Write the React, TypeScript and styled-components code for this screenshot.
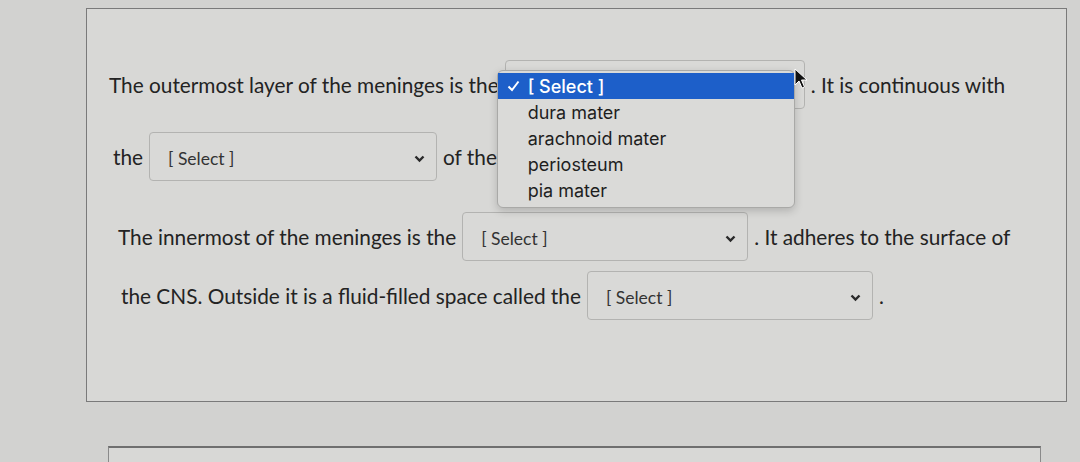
import React from 'react';
import styled, { createGlobalStyle } from 'styled-components';

const GlobalStyle = createGlobalStyle`
  body {
    margin: 0;
    background: #d2d2d0;
    font-family: Lato, "Open Sans", sans-serif;
  }
`;

const Page = styled.div`
  height: 462px;
  overflow: hidden;
  box-sizing: border-box;
  padding: 8px 13px 0 86px;
`;

const Panel = styled.div`
  height: 394px;
  box-sizing: border-box;
  border: 1px solid #7a7a7a;
  background: #d8d8d6;
  padding: 51px 0 0 22px;
`;

const NextPanel = styled.div`
  height: 60px;
  margin: 44px 26px 0 22px;
  border-top: 2px solid #6f6f6f;
  border-left: 1px solid #8a8a8a;
  border-right: 1px solid #8a8a8a;
  background: #d8d8d6;
`;

const Paragraph = styled.div<{ $gap: number; $after?: number }>`
  display: flex;
  flex-direction: column;
  gap: ${(p) => p.$gap}px;
  margin-bottom: ${(p) => p.$after ?? 0}px;
`;

const Line = styled.div<{ $indent?: number }>`
  display: flex;
  align-items: baseline;
  gap: 6px;
  padding-left: ${(p) => p.$indent ?? 0}px;
  font-size: 20.8px;
  color: #232323;
  white-space: nowrap;
`;

const Text = styled.span``;

const SelectWrap = styled.span`
  position: relative;
  display: inline-flex;
`;

const SelectBox = styled.span<{ $width: number }>`
  display: flex;
  align-items: center;
  justify-content: space-between;
  box-sizing: border-box;
  width: ${(p) => p.$width}px;
  height: 49px;
  padding: 4px 11px 0 18px;
  border: 1px solid #b3b3b1;
  border-radius: 4px;
  background: #d9d9d7;
  font-size: 17.5px;
  color: #333;
`;

const Label = styled.span<{ $covered?: boolean }>`
  visibility: ${(p) => (p.$covered ? 'hidden' : 'visible')};
`;

const Chevron = () => (
  <svg width="11" height="8" viewBox="0 0 11 8" aria-hidden>
    <path d="M1.5 1.5 L5.5 5.5 L9.5 1.5" fill="none" stroke="#2a2a2a" strokeWidth="2.4" />
  </svg>
);

const Menu = styled.div`
  position: absolute;
  left: -8px;
  top: 10px;
  width: 298px;
  box-sizing: border-box;
  padding: 2px 0 4px;
  border: 1px solid #a9a9a7;
  border-radius: 6px;
  background: #dadad8;
  box-shadow: 0 3px 8px rgba(0, 0, 0, 0.18);
  font-family: Inter, "Open Sans", sans-serif;
  font-size: 18px;
  color: #1e1e1e;
  z-index: 2;
`;

const MenuItem = styled.div<{ $active?: boolean }>`
  display: flex;
  align-items: center;
  height: 26px;
  padding-left: 30px;
  position: relative;
  background: ${(p) => (p.$active ? '#1d5fc9' : 'transparent')};
  color: ${(p) => (p.$active ? '#fff' : '#1e1e1e')};
  font-weight: ${(p) => (p.$active ? 500 : 400)};
`;

const Check = styled.svg`
  position: absolute;
  left: 9px;
  top: 7px;
`;

const Cursor = styled.svg`
  position: absolute;
  left: 289px;
  top: 8px;
  z-index: 3;
`;

const Select = ({ width, covered }: { width: number; covered?: boolean }) => (
  <SelectBox $width={width}>
    <Label $covered={covered}>[ Select ]</Label>
    <Chevron />
  </SelectBox>
);

const options = ['dura mater', 'arachnoid mater', 'periosteum', 'pia mater'];

const App: React.FC = () => (
  <>
    <GlobalStyle />
    <Page>
      <Panel>
        <Paragraph $gap={23} $after={31}>
          <Line>
            <Text>The outermost layer of the meninges is the</Text>
            <SelectWrap>
              <Select width={300} covered />
              <Menu>
                <MenuItem $active>
                  <Check width="13" height="12" viewBox="0 0 13 12" aria-hidden>
                    <path d="M1.5 6.5 L5 10 L11.5 1.5" fill="none" stroke="#fff" strokeWidth="2" />
                  </Check>
                  [ Select ]
                </MenuItem>
                {options.map((o) => (
                  <MenuItem key={o}>{o}</MenuItem>
                ))}
              </Menu>
              <Cursor width="14" height="22" viewBox="0 0 14 22">
                <path d="M1 1 L1 17 L5 13 L8 20 L10.5 19 L7.5 12 L13 12 Z" fill="#111" stroke="#fff" strokeWidth="1" />
              </Cursor>
            </SelectWrap>
            <Text>. It is continuous with</Text>
          </Line>
          <Line $indent={4}>
            <Text>the</Text>
            <Select width={288} />
            <Text>of the</Text>
          </Line>
        </Paragraph>
        <Paragraph $gap={10}>
          <Line $indent={9}>
            <Text>The innermost of the meninges is the</Text>
            <Select width={286} />
            <Text>. It adheres to the surface of</Text>
          </Line>
          <Line $indent={12}>
            <Text>the CNS. Outside it is a fluid-filled space called the</Text>
            <Select width={286} />
            <Text>.</Text>
          </Line>
        </Paragraph>
      </Panel>
      <NextPanel />
    </Page>
  </>
);

export default App;
